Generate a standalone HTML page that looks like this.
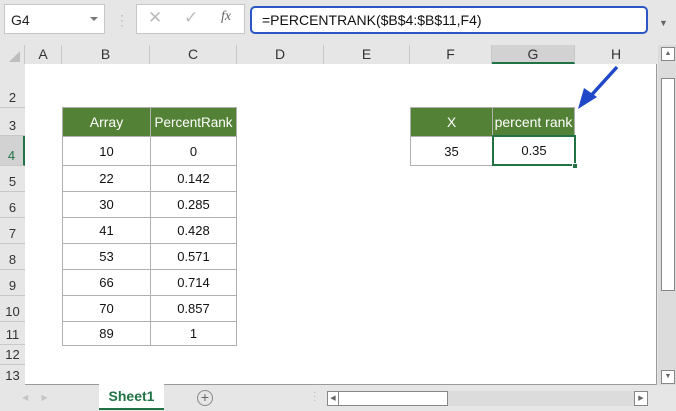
<!DOCTYPE html>
<html><head><style>
*{box-sizing:border-box;margin:0;padding:0}
body{width:676px;height:411px;background:#e6e6e6;font-family:"Liberation Sans",sans-serif;position:relative;overflow:hidden;font-size:13px;color:#222}
.a{position:absolute}
.ch{position:absolute;top:45px;height:19px;border-right:1px solid #c8c8c8;text-align:center;line-height:19px;font-size:14px;color:#333}
.rh{position:absolute;left:0;width:25px;border-bottom:1px solid #c8c8c8;text-align:center;font-size:13px;color:#333;display:flex;align-items:flex-end;justify-content:center;padding-bottom:2px}
.c{position:absolute;border:1px solid #b0b0b0;text-align:center;display:flex;align-items:center;justify-content:center;font-size:13px;background:#fff;color:#111}
.h{background:#538135;color:#fff;border-color:#b0b0b0}
</style></head><body>
<div class="a" style="left:4px;top:4px;width:101px;height:30px;background:#fff;border:1px solid #c6c6c6;padding:7px 0 0 6px;font-size:14px">G4</div>
<div class="a" style="left:90px;top:17px;border-left:4px solid transparent;border-right:4px solid transparent;border-top:4px solid #777"></div>
<div class="a" style="left:120px;top:13px;color:#aaa;font-size:12px;line-height:5px">·<br>·<br>·</div>
<div class="a" style="left:136px;top:4px;width:109px;height:30px;background:#fff;border:1px solid #c6c6c6"></div>
<div class="a" style="left:148px;top:8px;color:#bbb;font-size:17px">✕</div>
<div class="a" style="left:184px;top:8px;color:#bbb;font-size:17px">✓</div>
<div class="a" style="left:221px;top:9px;color:#666;font-size:14px;font-style:italic;font-family:'Liberation Serif',serif">fx</div>
<div class="a" style="left:250px;top:6px;width:398px;height:28px;background:#fff;border:2px solid #2b56c6;border-radius:5px;padding:4px 0 0 10px;font-size:14px;color:#111">=PERCENTRANK($B$4:$B$11,F4)</div>
<div class="a" style="left:659px;top:18px;color:#666;font-size:9px">&#9660;</div>
<div class="a" style="left:0;top:45px;width:25px;height:19px;border-right:1px solid #c8c8c8"></div>
<div class="a" style="left:9px;top:51px;width:0;height:0;border-left:11px solid transparent;border-bottom:11px solid #bdbdbd"></div>
<div class="ch" style="left:25px;width:37px">A</div>
<div class="ch" style="left:62px;width:88px">B</div>
<div class="ch" style="left:150px;width:87px">C</div>
<div class="ch" style="left:237px;width:87px">D</div>
<div class="ch" style="left:324px;width:86px">E</div>
<div class="ch" style="left:410px;width:82px">F</div>
<div class="ch" style="left:492px;width:83px;background:#d2d2d2;border-bottom:2px solid #217346">G</div>
<div class="ch" style="left:575px;width:82px;border-right:none">H</div>
<div class="a" style="left:25px;top:64px;width:632px;height:321px;background:#fff;border-right:1px solid #9a9a9a;border-bottom:1px solid #9a9a9a"></div>
<div class="rh" style="top:64px;height:44px">2</div>
<div class="rh" style="top:108px;height:28px">3</div>
<div class="rh" style="top:136px;height:30px;background:#d2d2d2;border-right:2px solid #217346;color:#217346">4</div>
<div class="rh" style="top:166px;height:26px">5</div>
<div class="rh" style="top:192px;height:26px">6</div>
<div class="rh" style="top:218px;height:26px">7</div>
<div class="rh" style="top:244px;height:26px">8</div>
<div class="rh" style="top:270px;height:26px">9</div>
<div class="rh" style="top:296px;height:26px">10</div>
<div class="rh" style="top:322px;height:23px">11</div>
<div class="rh" style="top:345px;height:20px">12</div>
<div class="rh" style="top:365px;height:20px;border-bottom:none">13</div>
<div class="c h" style="left:62px;top:107px;width:89px;height:30px;font-size:14px">Array</div>
<div class="c h" style="left:150px;top:107px;width:87px;height:30px;font-size:13.5px">PercentRank</div>
<div class="c" style="left:62px;top:136px;width:89px;height:30px">10</div><div class="c" style="left:150px;top:136px;width:87px;height:30px">0</div>
<div class="c" style="left:62px;top:165px;width:89px;height:27px">22</div><div class="c" style="left:150px;top:165px;width:87px;height:27px">0.142</div>
<div class="c" style="left:62px;top:191px;width:89px;height:27px">30</div><div class="c" style="left:150px;top:191px;width:87px;height:27px">0.285</div>
<div class="c" style="left:62px;top:217px;width:89px;height:27px">41</div><div class="c" style="left:150px;top:217px;width:87px;height:27px">0.428</div>
<div class="c" style="left:62px;top:243px;width:89px;height:27px">53</div><div class="c" style="left:150px;top:243px;width:87px;height:27px">0.571</div>
<div class="c" style="left:62px;top:269px;width:89px;height:27px">66</div><div class="c" style="left:150px;top:269px;width:87px;height:27px">0.714</div>
<div class="c" style="left:62px;top:295px;width:89px;height:27px">70</div><div class="c" style="left:150px;top:295px;width:87px;height:27px">0.857</div>
<div class="c" style="left:62px;top:321px;width:89px;height:25px">89</div><div class="c" style="left:150px;top:321px;width:87px;height:25px">1</div>
<div class="c h" style="left:410px;top:107px;width:83px;height:30px;font-size:14px">X</div>
<div class="c h" style="left:492px;top:107px;width:83px;height:30px;font-size:14px">percent rank</div>
<div class="c" style="left:410px;top:136px;width:83px;height:30px">35</div>
<div class="c" style="left:492px;top:135px;width:84px;height:31px;border:2px solid #217346">0.35</div>
<div class="a" style="left:572px;top:163px;width:6px;height:6px;background:#217346;border:1px solid #fff"></div>
<svg class="a" style="left:575px;top:60px" width="50" height="52"><line x1="42" y1="7" x2="12" y2="40" stroke="#1f47c7" stroke-width="3.5"/><polygon points="3,49 22,37 9,28" fill="#1f47c7"/></svg>
<div class="a" style="left:658px;top:45px;width:18px;height:340px;background:#dcdcdc"></div>
<div class="a" style="left:661px;top:47px;width:14px;height:14px;background:#fff;border:1px solid #888;font-size:7px;text-align:center;line-height:12px;color:#666">▲</div>
<div class="a" style="left:661px;top:78px;width:14px;height:213px;background:#fff;border:1px solid #888"></div>
<div class="a" style="left:661px;top:370px;width:14px;height:14px;background:#fff;border:1px solid #888;font-size:7px;text-align:center;line-height:12px;color:#666">▼</div>
<div class="a" style="left:22px;top:393px;color:#c4c4c4;font-size:8px">◀&nbsp;&nbsp;&nbsp;&nbsp;&nbsp;&nbsp;▶</div>
<div class="a" style="left:99px;top:384px;width:65px;height:26px;background:#fff;border-bottom:2px solid #217346;color:#217346;font-weight:bold;font-size:14px;text-align:center;line-height:25px">Sheet1</div>
<div class="a" style="left:197px;top:390px;width:16px;height:16px;border:1px solid #888;border-radius:50%;text-align:center;line-height:13px;color:#666;font-size:14px">+</div>
<div class="a" style="left:313px;top:391px;color:#bbb;font-size:10px;line-height:4px">·<br>·<br>·</div>
<div class="a" style="left:327px;top:391px;width:321px;height:15px;background:#dcdcdc"></div>
<div class="a" style="left:327px;top:391px;width:121px;height:15px;background:#fff;border:1px solid #888"></div>
<div class="a" style="left:327px;top:391px;width:12px;height:15px;border:1px solid #888;background:#fff;font-size:7px;color:#666;text-align:center;line-height:13px">◀</div>
<div class="a" style="left:634px;top:391px;width:14px;height:15px;border:1px solid #888;background:#fff;font-size:7px;color:#666;text-align:center;line-height:13px">▶</div>
</body></html>
